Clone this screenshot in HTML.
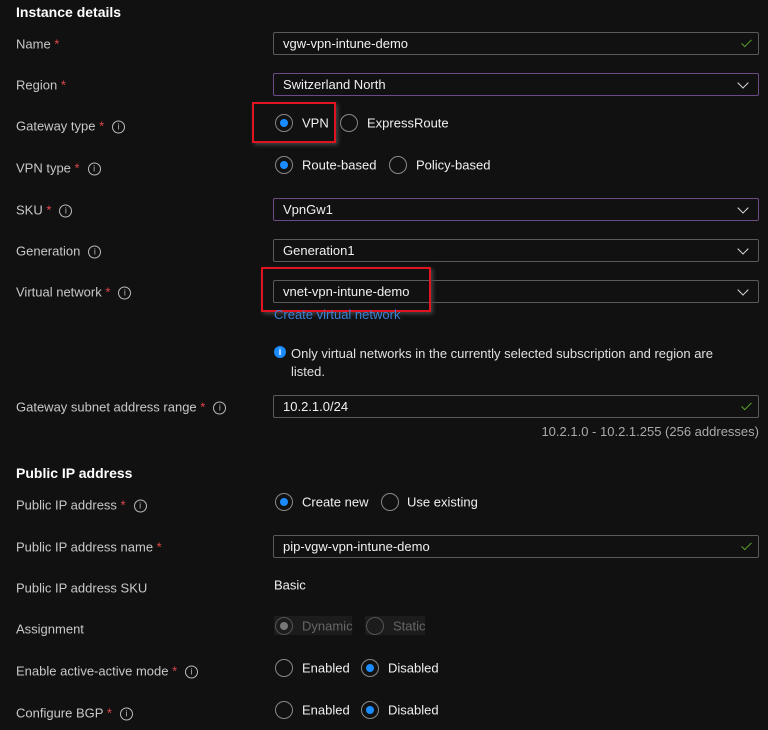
<!DOCTYPE html>
<html><head><style>
body{margin:0;width:768px;height:730px;background:#111;font-family:"Liberation Sans",sans-serif;font-size:13px;color:#d0d0d0;position:relative;overflow:hidden}
.a{position:absolute;white-space:nowrap}
.lbl{color:#c8c8c8;transform:translateY(-50%)}
.st{color:#e0474c}
.i{display:inline-block;width:11px;height:11px;border:1px solid #bbb;border-radius:50%;font-size:9px;line-height:11px;text-align:center;vertical-align:middle;margin-left:8px;color:#bbb}
.h{font-weight:bold;color:#fff;font-size:14px}
.box{position:absolute;left:273px;width:486px;height:23px;border:1px solid #5a5a5a;border-radius:2px;box-sizing:border-box;background:#111}
.box span{position:absolute;left:9px;top:3px;color:#f0f0f0}
.p{border-color:#6b4a85}
.chev{position:absolute;right:11px;top:5px;width:7px;height:7px;border-right:1.3px solid #ddd;border-bottom:1.3px solid #ddd;transform:rotate(45deg)}
.chk{position:absolute;right:9px;top:4px;width:4px;height:9px;border-right:1.5px solid #5aa02c;border-bottom:1.5px solid #5aa02c;transform:rotate(45deg)}
.r{position:absolute;width:18px;height:18px;border:1px solid #888;border-radius:50%;box-sizing:border-box;transform:translateY(-50%)}
.r.on::after{content:"";position:absolute;left:4px;top:4px;width:8px;height:8px;border-radius:50%;background:#1a8cff}
.rt{transform:translateY(-50%);color:#f0f0f0}
.red{position:absolute;border:2px solid #e0141e;box-shadow:2px 2px 4px #444}
</style></head><body>
<div class="a h" style="left:16px;top:4px">Instance details</div>
<div class="a lbl" style="left:16px;top:44px">Name <span class="st">*</span></div>
<div class="box" style="top:32px"><span>vgw-vpn-intune-demo</span><div class="chk"></div></div>
<div class="a lbl" style="left:16px;top:85px">Region <span class="st">*</span></div>
<div class="box p" style="top:73px"><span>Switzerland North</span><div class="chev"></div></div>
<div class="a lbl" style="left:16px;top:126px">Gateway type <span class="st">*</span><span class="i">i</span></div>
<div class="red" style="left:252px;top:102px;width:80px;height:37px"></div>
<div class="r on" style="left:275px;top:123px"></div><div class="a rt" style="left:302px;top:123px">VPN</div>
<div class="r" style="left:340px;top:123px"></div><div class="a rt" style="left:367px;top:123px">ExpressRoute</div>
<div class="a lbl" style="left:16px;top:168px">VPN type <span class="st">*</span><span class="i">i</span></div>
<div class="r on" style="left:275px;top:165px"></div><div class="a rt" style="left:302px;top:165px">Route-based</div>
<div class="r" style="left:389px;top:165px"></div><div class="a rt" style="left:416px;top:165px">Policy-based</div>
<div class="a lbl" style="left:16px;top:210px">SKU <span class="st">*</span><span class="i">i</span></div>
<div class="box p" style="top:198px"><span>VpnGw1</span><div class="chev"></div></div>
<div class="a lbl" style="left:16px;top:251px">Generation<span class="i">i</span></div>
<div class="box" style="top:239px"><span>Generation1</span><div class="chev"></div></div>
<div class="a lbl" style="left:16px;top:292px">Virtual network <span class="st">*</span><span class="i">i</span></div>
<div class="box" style="top:280px"><span>vnet-vpn-intune-demo</span><div class="chev"></div></div>
<div class="red" style="left:261px;top:267px;width:166px;height:41px"></div>
<div class="a" style="left:274px;top:307px;color:#3b82d6">Create virtual network</div>
<div class="a" style="left:274px;top:346px;width:12px;height:12px;border-radius:50%;background:#1a8cff;color:#fff;font-size:9px;font-weight:bold;text-align:center;line-height:12px">i</div>
<div class="a" style="left:291px;top:345px;line-height:18px;color:#e0e0e0;white-space:normal;width:445px">Only virtual networks in the currently selected subscription and region are listed.</div>
<div class="a lbl" style="left:16px;top:407px">Gateway subnet address range <span class="st">*</span><span class="i">i</span></div>
<div class="box" style="top:395px"><span>10.2.1.0/24</span><div class="chk"></div></div>
<div class="a" style="right:9px;top:424px;color:#aaa">10.2.1.0 - 10.2.1.255 (256 addresses)</div>
<div class="a h" style="left:16px;top:465px">Public IP address</div>
<div class="a lbl" style="left:16px;top:505px">Public IP address <span class="st">*</span><span class="i">i</span></div>
<div class="r on" style="left:275px;top:502px"></div><div class="a rt" style="left:302px;top:502px">Create new</div>
<div class="r" style="left:381px;top:502px"></div><div class="a rt" style="left:407px;top:502px">Use existing</div>
<div class="a lbl" style="left:16px;top:547px">Public IP address name <span class="st">*</span></div>
<div class="box" style="top:535px"><span>pip-vgw-vpn-intune-demo</span><div class="chk"></div></div>
<div class="a lbl" style="left:16px;top:588px">Public IP address SKU</div>
<div class="a rt" style="left:274px;top:585px">Basic</div>
<div class="a lbl" style="left:16px;top:629px">Assignment</div>
<div class="a" style="left:274px;top:616px;width:78px;height:19px;background:#1c1c1c"></div>
<div class="a" style="left:365px;top:616px;width:60px;height:19px;background:#1c1c1c"></div>
<div class="r" style="left:275px;top:626px;border-color:#555"><div style="position:absolute;left:4px;top:4px;width:8px;height:8px;border-radius:50%;background:#777"></div></div>
<div class="a rt" style="left:302px;top:626px;color:#666">Dynamic</div>
<div class="r" style="left:366px;top:626px;border-color:#555"></div><div class="a rt" style="left:393px;top:626px;color:#666">Static</div>
<div class="a lbl" style="left:16px;top:671px">Enable active-active mode <span class="st">*</span><span class="i">i</span></div>
<div class="r" style="left:275px;top:668px"></div><div class="a rt" style="left:302px;top:668px">Enabled</div>
<div class="r on" style="left:361px;top:668px"></div><div class="a rt" style="left:388px;top:668px">Disabled</div>
<div class="a lbl" style="left:16px;top:713px">Configure BGP <span class="st">*</span><span class="i">i</span></div>
<div class="r" style="left:275px;top:710px"></div><div class="a rt" style="left:302px;top:710px">Enabled</div>
<div class="r on" style="left:361px;top:710px"></div><div class="a rt" style="left:388px;top:710px">Disabled</div>
</body></html>
